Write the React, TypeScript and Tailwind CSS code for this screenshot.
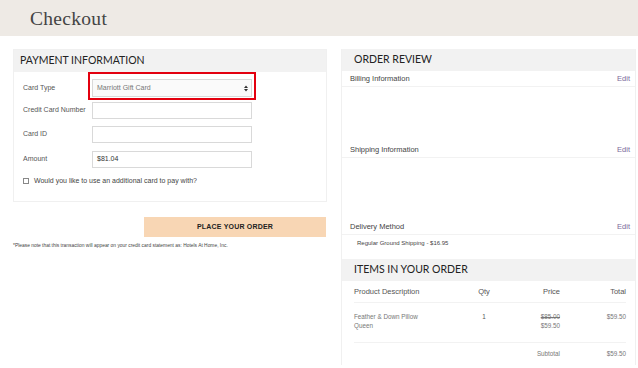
import React from "react";

const sans = "font-['Liberation_Sans',Arial,sans-serif]";
const head = "font-['Lato','Liberation_Sans',sans-serif]";

const Field = ({ label, value, className = "" }: { label: string; value?: string; className?: string }) => (
  <div className={`flex items-center h-[17px] ${className}`}>
    <span className="w-[69px] text-[7px] text-[#555]">{label}</span>
    <div className="w-[160px] h-[17px] border border-[#d9d9d9] bg-white px-[4px] flex items-center text-[7px] text-[#333]">
      {value}
    </div>
  </div>
);

const ReviewRow = ({ title }: { title: string }) => (
  <div className="flex justify-between items-center h-[16px] pl-[8px] pr-[5px] border-b border-[#f2f2f2] text-[7.5px]">
    <span className="text-[#444]">{title}</span>
    <span className="text-[#7a6a9a]">Edit</span>
  </div>
);

export default function App() {
  return (
    <div className={`w-[638px] h-[368px] overflow-hidden bg-white ${sans}`}>
      <div className="h-[36px] bg-[#eeeae5] pl-[30px] flex items-center">
        <h1 className="font-['Liberation_Serif',serif] text-[19.5px] text-[#444] font-light tracking-[0.3px] pt-[1px]">
          Checkout
        </h1>
      </div>

      <div className="flex pt-[13px] pl-[13px] gap-[14px]">
        {/* left column */}
        <div className="w-[314px] flex flex-col">
          <div className="border border-[#f0f0f0]">
            <div className="h-[22px] bg-[#f2f2f2] px-[6px] flex items-center">
              <h2 className={`${head} text-[10.5px] text-[#222] font-normal`}>PAYMENT INFORMATION</h2>
            </div>
            <div className="pl-[9px] pt-[7px] pb-[16px] flex flex-col">
              <div className="flex items-center h-[18px]">
                <span className="w-[69px] text-[7px] text-[#555]">Card Type</span>
                <div className="relative">
                  <div className="absolute -top-[7px] -bottom-[3px] -left-[4px] -right-[4px] border-2 border-[#e3000f]" />
                  <div className="w-[160px] h-[18px] border border-[#d9d9d9] bg-[#fafafa] pl-[4px] pr-[3px] flex items-center justify-between text-[7px] text-[#777]">
                    <span>Marriott Gift Card</span>
                    <svg width="4" height="7" viewBox="0 0 4 7">
                      <path d="M0 3 L2 0.5 L4 3 Z M0 4 L2 6.5 L4 4 Z" fill="#333" />
                    </svg>
                  </div>
                </div>
              </div>
              <Field label="Credit Card Number" className="mt-[5px]" />
              <Field label="Card ID" className="mt-[7px]" />
              <Field label="Amount" value="$81.04" className="mt-[8px]" />
              <div className="flex items-center gap-[5px] mt-[9px] h-[8px]">
                <span className="w-[6px] h-[6px] border border-[#888] bg-white" />
                <span className="text-[7px] text-[#444]">Would you like to use an additional card to pay with?</span>
              </div>
            </div>
          </div>
          <div className="flex justify-end mt-[15px] pr-[1px]">
            <button className="w-[182px] h-[20px] bg-[#f8d6b4] text-[7px] text-[#222] font-bold tracking-[0.2px]">
              PLACE YOUR ORDER
            </button>
          </div>
          <p className="text-[4.9px] text-[#444] mt-[6px] leading-[6px]">
            *Please note that this transaction will appear on your credit card statement as: Hotels At Home, Inc.
          </p>
        </div>

        {/* right column */}
        <div className="w-[295px] border-x border-[#f0f0f0]">
          <div className="h-[22px] bg-[#f2f2f2] px-[12px] flex items-center">
            <h2 className={`${head} text-[10.5px] text-[#222] font-normal`}>ORDER REVIEW</h2>
          </div>
          <ReviewRow title="Billing Information" />
          <div className="h-[55px]" />
          <ReviewRow title="Shipping Information" />
          <div className="h-[61px]" />
          <ReviewRow title="Delivery Method" />
          <div className="h-[24px] pl-[15px] pt-[4px] text-[6px] leading-[8px] text-[#444]">
            Regular Ground Shipping - $16.95
          </div>
          <div className="h-[22px] bg-[#f2f2f2] px-[12px] flex items-center">
            <h2 className={`${head} text-[10.5px] text-[#222] font-normal`}>ITEMS IN YOUR ORDER</h2>
          </div>
          <div className="pl-[12px] pr-[9px]">
            <div className="grid grid-cols-[110px_40px_56px_66px] h-[22px] items-center border-b border-[#f2f2f2] text-[7.5px] text-[#555]">
              <span>Product Description</span>
              <span className="text-center">Qty</span>
              <span className="text-right">Price</span>
              <span className="text-right">Total</span>
            </div>
            <div className="grid grid-cols-[110px_40px_56px_66px] pt-[9px] pb-[12px] border-b border-[#f2f2f2] text-[6.3px] text-[#777] leading-[9px]">
              <div className="flex flex-col">
                <span>Feather &amp; Down Pillow</span>
                <span>Queen</span>
              </div>
              <span className="text-center text-[#555]">1</span>
              <div className="flex flex-col items-end">
                <span className="line-through">$85.00</span>
                <span>$59.50</span>
              </div>
              <span className="text-right">$59.50</span>
            </div>
            <div className="grid grid-cols-[110px_40px_56px_66px] h-[22px] items-center text-[6.3px] text-[#777]">
              <span />
              <span />
              <span className="text-right">Subtotal</span>
              <span className="text-right">$59.50</span>
            </div>
          </div>
        </div>
      </div>
    </div>
  );
}
